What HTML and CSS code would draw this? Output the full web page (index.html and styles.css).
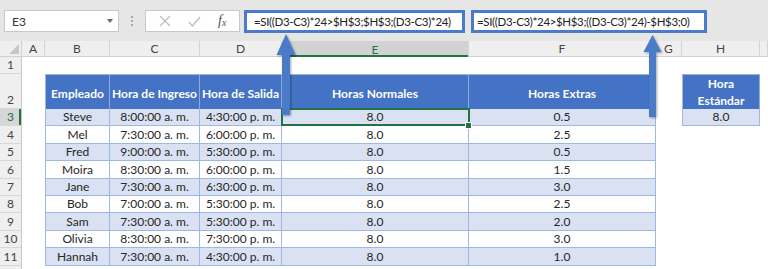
FILE: index.html
```html
<!DOCTYPE html>
<html lang="es">
<head>
    <meta charset="UTF-8">
    <title>Horas Extras</title>
    <link rel="stylesheet" href="styles.css">
</head>
<body>
<div class="page">
    <div class="toolbar">
        <div class="namebox"><span>E3</span><span class="drop"></span></div>
        <div class="grip"><i></i><i></i><i></i></div>
        <div class="btns">
            <svg width="12" height="12" viewBox="0 0 12 12"><path d="M1 1L11 11M11 1L1 11" stroke="#bdbdbd" stroke-width="1.3" fill="none"/></svg>
            <svg width="13" height="11" viewBox="0 0 13 11"><path d="M1 6L4.5 10L12 1" stroke="#bdbdbd" stroke-width="1.3" fill="none"/></svg>
            <span class="fx">f<sub>x</sub></span>
        </div>
        <div class="formula f1">=SI((D3-C3)*24&gt;$H$3;$H$3;(D3-C3)*24)</div>
        <div class="formula f2">=SI((D3-C3)*24&gt;$H$3;((D3-C3)*24)-$H$3;0)</div>
    </div>

    <div class="sheet">
        <div class="row hdr">
            <div class="corner"><span></span></div>
            <div class="ch">A</div><div class="ch">B</div><div class="ch">C</div><div class="ch">D</div>
            <div class="ch on">E</div><div class="ch">F</div><div class="ch">G</div><div class="ch">H</div><div class="ch"></div>
        </div>
        <div class="row r1">
            <div class="rh">1</div><div></div><div></div><div></div><div></div><div></div><div></div><div></div><div></div><div></div>
        </div>
        <div class="row r2">
            <div class="rh">2</div><div></div>
            <div class="th first">Empleado</div>
            <div class="th">Hora de Ingreso</div>
            <div class="th">Hora de Salida</div>
            <div class="th">Horas Normales</div>
            <div class="th">Horas Extras</div>
            <div></div>
            <div class="th first two">Hora<br>Estándar</div>
            <div></div>
        </div>
        <div class="row band">
            <div class="rh on">3</div><div></div>
            <div class="t first">Steve</div><div class="t">8:00:00 a. m.</div><div class="t">4:30:00 p. m.</div>
            <div class="t sel">8.0</div><div class="t">0.5</div>
            <div></div><div class="t first">8.0</div><div></div>
        </div>
        <div class="row">
            <div class="rh">4</div><div></div>
            <div class="t first">Mel</div><div class="t">7:30:00 a. m.</div><div class="t">6:00:00 p. m.</div>
            <div class="t">8.0</div><div class="t">2.5</div><div></div><div></div><div></div>
        </div>
        <div class="row band">
            <div class="rh">5</div><div></div>
            <div class="t first">Fred</div><div class="t">9:00:00 a. m.</div><div class="t">5:30:00 p. m.</div>
            <div class="t">8.0</div><div class="t">0.5</div><div></div><div></div><div></div>
        </div>
        <div class="row">
            <div class="rh">6</div><div></div>
            <div class="t first">Moira</div><div class="t">8:30:00 a. m.</div><div class="t">6:00:00 p. m.</div>
            <div class="t">8.0</div><div class="t">1.5</div><div></div><div></div><div></div>
        </div>
        <div class="row band">
            <div class="rh">7</div><div></div>
            <div class="t first">Jane</div><div class="t">7:30:00 a. m.</div><div class="t">6:30:00 p. m.</div>
            <div class="t">8.0</div><div class="t">3.0</div><div></div><div></div><div></div>
        </div>
        <div class="row">
            <div class="rh">8</div><div></div>
            <div class="t first">Bob</div><div class="t">7:00:00 a. m.</div><div class="t">5:30:00 p. m.</div>
            <div class="t">8.0</div><div class="t">2.5</div><div></div><div></div><div></div>
        </div>
        <div class="row band">
            <div class="rh">9</div><div></div>
            <div class="t first">Sam</div><div class="t">7:30:00 a. m.</div><div class="t">5:30:00 p. m.</div>
            <div class="t">8.0</div><div class="t">2.0</div><div></div><div></div><div></div>
        </div>
        <div class="row">
            <div class="rh">10</div><div></div>
            <div class="t first">Olivia</div><div class="t">8:30:00 a. m.</div><div class="t">7:30:00 p. m.</div>
            <div class="t">8.0</div><div class="t">3.0</div><div></div><div></div><div></div>
        </div>
        <div class="row band">
            <div class="rh">11</div><div></div>
            <div class="t first">Hannah</div><div class="t">7:30:00 a. m.</div><div class="t">4:30:00 p. m.</div>
            <div class="t">8.0</div><div class="t">1.0</div><div></div><div></div><div></div>
        </div>
        <div class="row">
            <div class="rh"></div>
        </div>
    </div>

    <!-- flechas que señalan las fórmulas -->
    <svg class="arrows" width="768" height="269" viewBox="0 0 768 269">
        <path d="M286 34L295.5 55H290V115H282V55H276.5Z"/>
        <path d="M652.5 35L661.5 52H656V117H649V52H643.5Z"/>
    </svg>
</div>
</body>
</html>
```

FILE: styles.css
```css
body,html{
    margin: 0;
    padding: 0;
    width: 100%;
    height: 100%;
    overflow: hidden;
}
body{
    font-family: Lato, "Liberation Sans", sans-serif;
    font-size: 12px;
    color: #262626;
    background: #fff;
}
.page{
    width: 768px;
    height: 269px;
    position: relative;
    overflow: hidden;
}

/* barra de fórmulas */
.toolbar{
    height: 41px;
    box-sizing: border-box;
    background: #e6e6e6;
    display: flex;
    align-items: flex-start;
    padding: 10px 0 0 4px;
}
.namebox{
    width: 115px;
    height: 22px;
    box-sizing: border-box;
    background: #fff;
    border: 1px solid #c8c8c8;
    display: flex;
    align-items: center;
    justify-content: space-between;
    padding: 0 5px 0 7px;
    color: #333;
}
.drop{
    width: 0;
    height: 0;
    border-left: 3px solid transparent;
    border-right: 3px solid transparent;
    border-top: 4px solid #666;
}
.grip{
    width: 26px;
    height: 22px;
    display: flex;
    flex-direction: column;
    align-items: center;
    justify-content: center;
    gap: 2px;
}
.grip i{
    width: 2px;
    height: 2px;
    background: #a9a9a9;
}
.btns{
    width: 95px;
    height: 22px;
    box-sizing: border-box;
    background: #fff;
    border: 1px solid #c8c8c8;
    display: flex;
    align-items: center;
    justify-content: space-around;
    padding: 0 4px;
}
.fx{
    font-family: "Liberation Serif", serif;
    font-style: italic;
    font-size: 14px;
    color: #555;
}
.fx sub{
    font-size: 10px;
    vertical-align: -1px;
}
.formula{
    height: 23px;
    box-sizing: border-box;
    background: #fff;
    border: 3px solid #4a7bc8;
    display: flex;
    align-items: center;
    white-space: nowrap;
    overflow: hidden;
    color: #222;
    font-size: 11.5px;
    letter-spacing: -0.35px;
}
.f1{
    width: 221px;
    margin-left: 4px;
    padding-left: 7px;
}
.f2{
    width: 236px;
    margin-left: 6px;
    padding-left: 3px;
}

/* hoja */
.row{
    display: grid;
    grid-template-columns: 22px 23px 65px 90px 82px 187px 187px 26px 78px 1fr;
    height: 17.4px;
}
.hdr{
    height: 16px;
    background: #efefef;
    border-bottom: 1px solid #d0d0d0;
    box-sizing: border-box;
}
.r1{
    height: 17px;
}
.r2{
    height: 35px;
}
.corner{
    border-right: 1px solid #d0d0d0;
    display: flex;
    align-items: flex-end;
    justify-content: flex-end;
    padding: 0 2px 2px 0;
}
.corner span{
    width: 0;
    height: 0;
    border-left: 10px solid transparent;
    border-bottom: 10px solid #c6c6c6;
}
.ch{
    border-right: 1px solid #d4d4d4;
    display: flex;
    align-items: center;
    justify-content: center;
    color: #444;
}
.ch.on{
    background: #d2d2d2;
    color: #217346;
    box-shadow: inset 0 -2px 0 #217346;
    margin-bottom: -1px;
}
.rh{
    background: #efefef;
    border-right: 1px solid #c8c8c8;
    border-bottom: 1px solid #d8d8d8;
    box-sizing: border-box;
    display: flex;
    align-items: flex-end;
    justify-content: center;
    padding-bottom: 1px;
    color: #444;
}
.rh.on{
    background: #d6d6d6;
    color: #217346;
    box-shadow: inset -2px 0 0 #217346;
}

/* tabla */
.th{
    background: #4472c4;
    color: #fff;
    font-weight: bold;
    border-top: 1px solid #9db4e0;
    border-right: 1px solid #8eaadb;
    box-sizing: border-box;
    display: flex;
    align-items: center;
    justify-content: center;
    text-align: center;
    padding-top: 3px;
    white-space: nowrap;
}
.th.two{
    line-height: 17px;
    padding-top: 0;
}
.t{
    border-right: 1px solid #9fb8e3;
    border-bottom: 1px solid #9fb8e3;
    box-sizing: border-box;
    display: flex;
    align-items: flex-end;
    justify-content: center;
    line-height: 16px;
}
.first{
    border-left: 1px solid #9fb8e3;
}
.band .t{
    background: #d9e1f2;
}
.sel{
    position: relative;
}
.sel::after{
    content: "";
    position: absolute;
    left: -1px;
    top: -1px;
    right: -2px;
    bottom: -1px;
    border: 2px solid #217346;
}
.sel::before{
    content: "";
    position: absolute;
    right: -4px;
    bottom: -4px;
    width: 5px;
    height: 5px;
    background: #217346;
    border: 1px solid #fff;
    z-index: 1;
}

.arrows{
    position: absolute;
    left: 0;
    top: 0;
    pointer-events: none;
    fill: #4a7bc8;
    filter: drop-shadow(1px 1px 1px rgba(0,0,0,.35));
}
```
